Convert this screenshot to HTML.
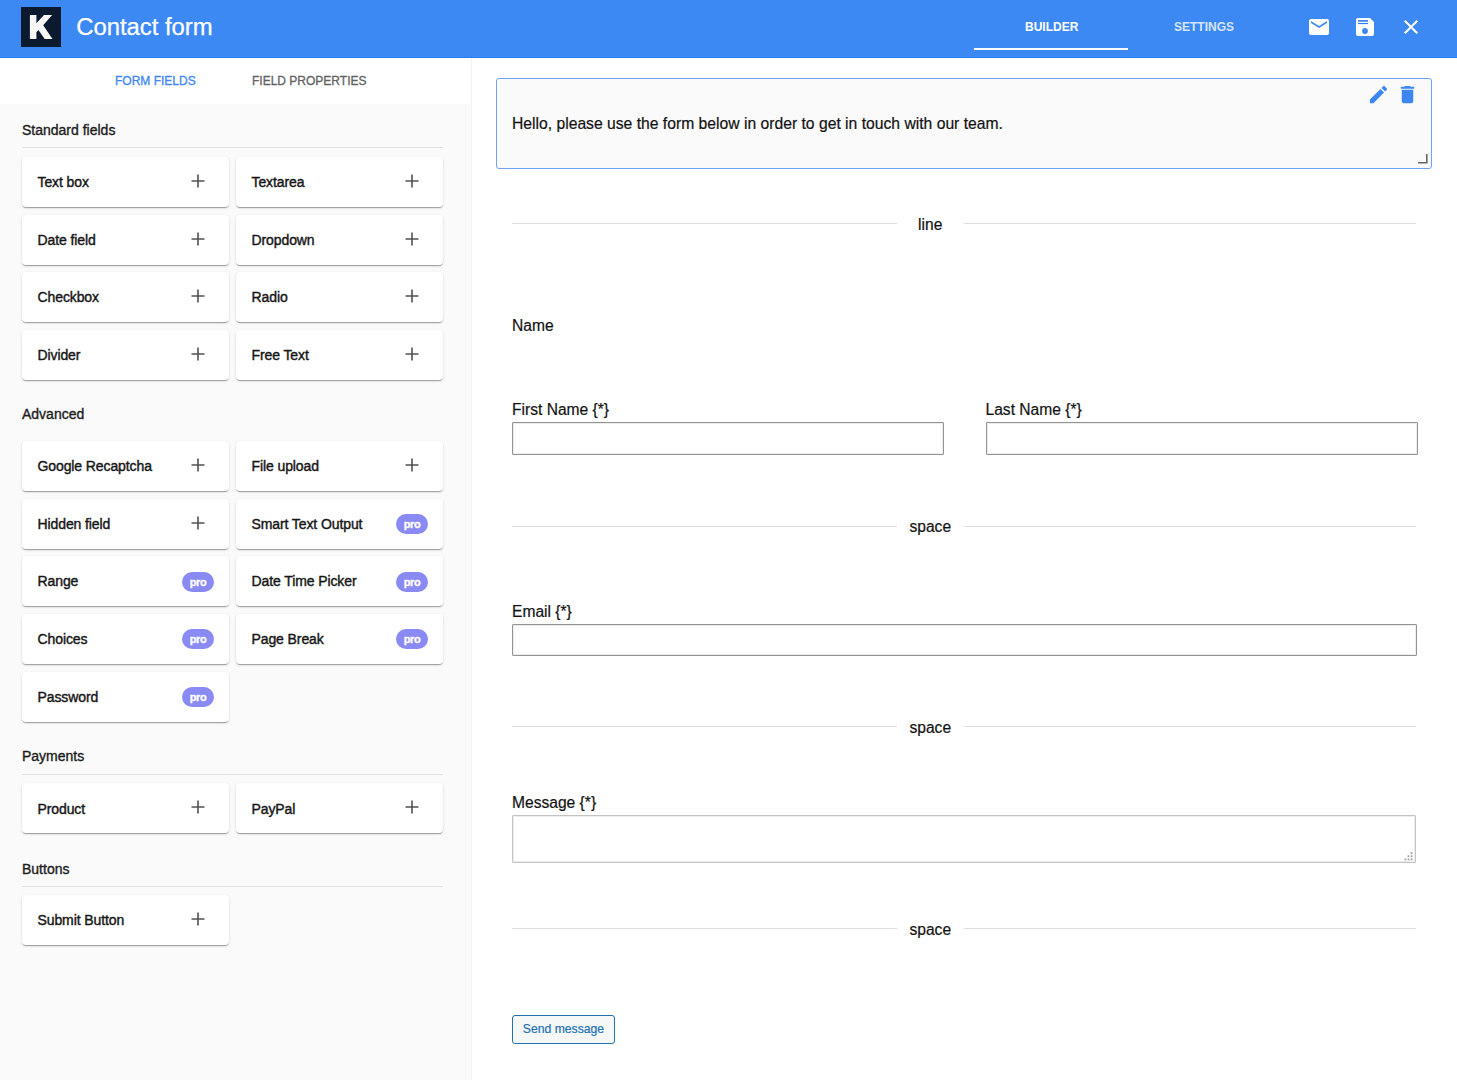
<!DOCTYPE html>
<html><head><meta charset="utf-8">
<style>
*{box-sizing:border-box;margin:0;padding:0}
html,body{width:1457px;height:1080px;overflow:hidden;background:#fff;font-family:"Liberation Sans", sans-serif;color:#1a1a1a}
.abs{position:absolute;white-space:nowrap}
#header{position:absolute;left:0;top:0;width:1457px;height:58px;background:#3d89f4;box-shadow:inset 0 -1px 0 #2c7cf2}
#logo{position:absolute;left:21px;top:7px;width:40px;height:40px;background:#0c1a2f}
#side{position:absolute;left:0;top:58px;width:472px;height:1022px;background:#fafafa;border-right:1px solid #f3f3f3}
#sidetabs{position:absolute;left:0;top:0;width:471px;height:46px;background:#fff}
.card{position:absolute;width:207px;height:50px;background:#fff;border-radius:4px;
  box-shadow:0px 2px 1px -1px rgba(0,0,0,0.2),0px 1px 1px 0px rgba(0,0,0,0.14),0px 1px 3px 0px rgba(0,0,0,0.12)}
.clabel{position:absolute;left:15.5px;top:18.1px;font-size:14px;line-height:14px;font-weight:400;-webkit-text-stroke:0.4px #161616;color:#161616;white-space:nowrap;letter-spacing:-0.1px}
.plus{position:absolute;right:24.4px;top:17.1px}
.pro{position:absolute;right:15px;top:15.3px;width:32px;height:20px;border-radius:10px;background:#8a8af4;color:#fff;font-size:11px;font-weight:700;line-height:20px;text-align:center;letter-spacing:-0.4px;-webkit-text-stroke:0.3px #fff}
.hd{position:absolute;white-space:nowrap;left:22px;font-size:14px;line-height:14px;font-weight:400;-webkit-text-stroke:0.35px #1c1c1c;color:#1c1c1c}
.hline{position:absolute;left:22px;width:421px;height:1px;background:#e2e2e2}
.txt{position:absolute;white-space:nowrap;font-size:15.6px;line-height:15.6px;color:#121212;-webkit-text-stroke:0.2px #121212}
.ctr{width:100px;text-align:center}
.divl{position:absolute;height:1px;background:#dedede}
.inp{position:absolute;border:1px solid #939393;border-radius:1px;background:#fff;box-shadow:inset 0 0 0 1px rgba(0,0,0,0.07)}
</style></head><body>
<div id="header">
  <div id="logo"><svg width="40" height="40" viewBox="0 0 40 40"><path fill="#f8f8f8" d="M8.9 8H15.4V16.3L23 8H31.1L22.2 18.3L31.5 31.9H23.7L17.4 23.1L15.4 25.2V31.9H8.9Z"/></svg></div>
  <div class="abs" style="left:76.2px;top:15.3px;font-size:23.85px;line-height:23.85px;color:#fff;-webkit-text-stroke:0.25px #fff">Contact form</div>
  <div class="abs" style="left:1025px;top:20.9px;font-size:12px;line-height:12px;font-weight:700;color:#fff">BUILDER</div>
  <div class="abs" style="left:974px;top:48px;width:154px;height:2px;background:#fff"></div>
  <div class="abs" style="left:1174px;top:20.9px;font-size:12px;line-height:12px;font-weight:700;color:rgba(255,255,255,0.8)">SETTINGS</div>
  <svg class="abs" style="left:1307px;top:15px" width="24" height="24" viewBox="0 0 24 24"><path fill="#fff" d="M20 4H4c-1.1 0-1.99.9-1.99 2L2 18c0 1.1.9 2 2 2h16c1.1 0 2-.9 2-2V6c0-1.1-.9-2-2-2zm0 4l-8 5-8-5V6l8 5 8-5v2z"/></svg>
  <svg class="abs" style="left:1353px;top:15px" width="24" height="24" viewBox="0 0 24 24"><path fill="#fff" d="M17 3H5c-1.11 0-2 .9-2 2v14c0 1.1.89 2 2 2h14c1.1 0 2-.9 2-2V7l-4-4z"/><circle cx="12" cy="16" r="2.9" fill="#3b86f3"/><rect x="5" y="5.1" width="10" height="1.6" fill="#2f7cf1"/><rect x="5" y="7.9" width="10" height="1.2" fill="#2f7cf1"/></svg>
  <svg class="abs" style="left:1399px;top:15px" width="24" height="24" viewBox="0 0 24 24"><path fill="#fff" d="M19 6.41L17.59 5 12 10.59 6.41 5 5 6.41 10.59 12 5 17.59 6.41 19 12 13.41 17.59 19 19 17.59 13.41 12z"/></svg>
</div>
<div id="side">
  <div id="sidetabs">
    <div class="abs" style="left:115px;top:16.9px;font-size:12px;line-height:12px;color:#3d87f4;-webkit-text-stroke:0.3px #3d87f4">FORM FIELDS</div>
    <div class="abs" style="left:252px;top:16.9px;font-size:12px;line-height:12px;color:#626262;-webkit-text-stroke:0.3px #626262">FIELD PROPERTIES</div>
  </div>
</div>
<div id="cards" style="position:absolute;left:0;top:0">
<div class="hd" style="top:123.4px">Standard fields</div>
<div class="hline" style="top:147px"></div>
<div class="card" style="left:22px;top:157.00px"><div class="clabel" style="top:17.90px">Text box</div><svg class="plus" width="14" height="14" viewBox="0 0 14 14"><path d="M7 0.5V13.5M0.5 7H13.5" stroke="#525252" stroke-width="1.6" fill="none"/></svg></div>
<div class="card" style="left:236px;top:157.00px"><div class="clabel" style="top:17.90px">Textarea</div><svg class="plus" width="14" height="14" viewBox="0 0 14 14"><path d="M7 0.5V13.5M0.5 7H13.5" stroke="#525252" stroke-width="1.6" fill="none"/></svg></div>
<div class="card" style="left:22px;top:214.67px"><div class="clabel" style="top:17.90px">Date field</div><svg class="plus" width="14" height="14" viewBox="0 0 14 14"><path d="M7 0.5V13.5M0.5 7H13.5" stroke="#525252" stroke-width="1.6" fill="none"/></svg></div>
<div class="card" style="left:236px;top:214.67px"><div class="clabel" style="top:17.90px">Dropdown</div><svg class="plus" width="14" height="14" viewBox="0 0 14 14"><path d="M7 0.5V13.5M0.5 7H13.5" stroke="#525252" stroke-width="1.6" fill="none"/></svg></div>
<div class="card" style="left:22px;top:272.34px"><div class="clabel" style="top:17.90px">Checkbox</div><svg class="plus" width="14" height="14" viewBox="0 0 14 14"><path d="M7 0.5V13.5M0.5 7H13.5" stroke="#525252" stroke-width="1.6" fill="none"/></svg></div>
<div class="card" style="left:236px;top:272.34px"><div class="clabel" style="top:17.90px">Radio</div><svg class="plus" width="14" height="14" viewBox="0 0 14 14"><path d="M7 0.5V13.5M0.5 7H13.5" stroke="#525252" stroke-width="1.6" fill="none"/></svg></div>
<div class="card" style="left:22px;top:330.01px"><div class="clabel" style="top:17.90px">Divider</div><svg class="plus" width="14" height="14" viewBox="0 0 14 14"><path d="M7 0.5V13.5M0.5 7H13.5" stroke="#525252" stroke-width="1.6" fill="none"/></svg></div>
<div class="card" style="left:236px;top:330.01px"><div class="clabel" style="top:17.90px">Free Text</div><svg class="plus" width="14" height="14" viewBox="0 0 14 14"><path d="M7 0.5V13.5M0.5 7H13.5" stroke="#525252" stroke-width="1.6" fill="none"/></svg></div>
<div class="hd" style="top:407.0px">Advanced</div>
<div class="card" style="left:22px;top:441.00px"><div class="clabel" style="top:17.90px">Google Recaptcha</div><svg class="plus" width="14" height="14" viewBox="0 0 14 14"><path d="M7 0.5V13.5M0.5 7H13.5" stroke="#525252" stroke-width="1.6" fill="none"/></svg></div>
<div class="card" style="left:236px;top:441.00px"><div class="clabel" style="top:17.90px">File upload</div><svg class="plus" width="14" height="14" viewBox="0 0 14 14"><path d="M7 0.5V13.5M0.5 7H13.5" stroke="#525252" stroke-width="1.6" fill="none"/></svg></div>
<div class="card" style="left:22px;top:498.67px"><div class="clabel" style="top:17.90px">Hidden field</div><svg class="plus" width="14" height="14" viewBox="0 0 14 14"><path d="M7 0.5V13.5M0.5 7H13.5" stroke="#525252" stroke-width="1.6" fill="none"/></svg></div>
<div class="card" style="left:236px;top:498.67px"><div class="clabel" style="top:17.90px">Smart Text Output</div><div class="pro">pro</div></div>
<div class="card" style="left:22px;top:556.34px"><div class="clabel" style="top:17.90px">Range</div><div class="pro">pro</div></div>
<div class="card" style="left:236px;top:556.34px"><div class="clabel" style="top:17.90px">Date Time Picker</div><div class="pro">pro</div></div>
<div class="card" style="left:22px;top:614.01px"><div class="clabel" style="top:17.90px">Choices</div><div class="pro">pro</div></div>
<div class="card" style="left:236px;top:614.01px"><div class="clabel" style="top:17.90px">Page Break</div><div class="pro">pro</div></div>
<div class="card" style="left:22px;top:671.68px"><div class="clabel" style="top:17.90px">Password</div><div class="pro">pro</div></div>
<div class="hd" style="top:748.8px">Payments</div>
<div class="hline" style="top:774px"></div>
<div class="card" style="left:22px;top:783.00px"><div class="clabel" style="top:19.20px">Product</div><svg class="plus" width="14" height="14" viewBox="0 0 14 14"><path d="M7 0.5V13.5M0.5 7H13.5" stroke="#525252" stroke-width="1.6" fill="none"/></svg></div>
<div class="card" style="left:236px;top:783.00px"><div class="clabel" style="top:19.20px">PayPal</div><svg class="plus" width="14" height="14" viewBox="0 0 14 14"><path d="M7 0.5V13.5M0.5 7H13.5" stroke="#525252" stroke-width="1.6" fill="none"/></svg></div>
<div class="hd" style="top:861.6999999999999px">Buttons</div>
<div class="hline" style="top:886px"></div>
<div class="card" style="left:22px;top:895.20px"><div class="clabel" style="top:17.70px">Submit Button</div><svg class="plus" width="14" height="14" viewBox="0 0 14 14"><path d="M7 0.5V13.5M0.5 7H13.5" stroke="#525252" stroke-width="1.6" fill="none"/></svg></div>
</div>

<!-- form area -->
<div class="abs" style="left:496px;top:78px;width:936px;height:91px;border:1px solid #6fa2f3;border-radius:3px;background:#fafafa">
  <svg class="abs" style="left:869.7px;top:3.9px" width="23" height="23" viewBox="0 0 24 24"><path fill="#3d87f4" d="M3 17.25V21h3.75L17.81 9.94l-3.75-3.75L3 17.25zM20.71 7.04c.39-.39.39-1.02 0-1.41l-2.34-2.34c-.39-.39-1.02-.39-1.41 0l-1.83 1.83 3.75 3.75 1.83-1.83z"/></svg>
  <svg class="abs" style="left:899.1px;top:3.9px" width="23" height="23" viewBox="0 0 24 24"><path fill="#3d87f4" d="M6 19c0 1.1.9 2 2 2h8c1.1 0 2-.9 2-2V7H6v12zM19 4h-3.5l-1-1h-5l-1 1H5v2h14V4z"/></svg>
  <svg class="abs" style="left:920px;top:74px" width="12" height="12" viewBox="0 0 12 12"><path d="M1 9.8H9.8V1" stroke="#666" stroke-width="1.6" fill="none"/></svg>
</div>
<div class="txt" style="left:512px;top:116.31px;font-size:15.7px;line-height:15.7px">Hello, please use the form below in order to get in touch with our team.</div>

<div class="divl" style="left:512px;top:223px;width:385px"></div>
<div class="divl" style="left:964px;top:223px;width:452px"></div>
<div class="txt ctr" style="left:880.25px;top:217.00px">line</div>

<div class="txt" style="left:512px;top:317.80px">Name</div>

<div class="txt" style="left:512px;top:401.90px">First Name {*}</div>
<div class="inp" style="left:512px;top:422px;width:432px;height:32.5px"></div>
<div class="txt" style="left:985.5px;top:401.90px">Last Name {*}</div>
<div class="inp" style="left:986px;top:422px;width:432px;height:32.5px"></div>

<div class="divl" style="left:512px;top:526px;width:385px"></div>
<div class="divl" style="left:964px;top:526px;width:452px"></div>
<div class="txt ctr" style="left:880.25px;top:519.00px">space</div>

<div class="txt" style="left:512px;top:604.10px">Email {*}</div>
<div class="inp" style="left:512px;top:623.5px;width:905px;height:32.5px"></div>

<div class="divl" style="left:512px;top:726px;width:385px"></div>
<div class="divl" style="left:964px;top:726px;width:452px"></div>
<div class="txt ctr" style="left:880.25px;top:719.80px">space</div>

<div class="txt" style="left:512px;top:795.00px">Message {*}</div>
<div class="inp" style="left:512px;top:815px;width:904px;height:48px;border-color:#c4c4c4">
  <svg class="abs" style="left:890px;top:34px" width="11" height="11" viewBox="0 0 11 11" fill="#a0a0a0"><rect x="7.7" y="2.2" width="1.8" height="1.8"/><rect x="4.6" y="5.3" width="1.8" height="1.8"/><rect x="7.7" y="5.3" width="1.8" height="1.8"/><rect x="1.5" y="8.5" width="1.8" height="1.8"/><rect x="4.6" y="8.5" width="1.8" height="1.8"/><rect x="7.7" y="8.5" width="1.8" height="1.8"/></svg>
</div>

<div class="divl" style="left:512px;top:928px;width:385px"></div>
<div class="divl" style="left:964px;top:928px;width:452px"></div>
<div class="txt ctr" style="left:880.25px;top:921.80px">space</div>

<div class="abs" style="left:512px;top:1015px;width:103px;height:29px;border:1px solid #2271b1;border-radius:3px;background:#f6f7f7">
  <div class="abs" style="left:0;width:101px;text-align:center;top:7.27px;font-size:12.2px;line-height:12.2px;color:#2271b1;-webkit-text-stroke:0.2px #2271b1">Send message</div>
</div>
</body></html>
